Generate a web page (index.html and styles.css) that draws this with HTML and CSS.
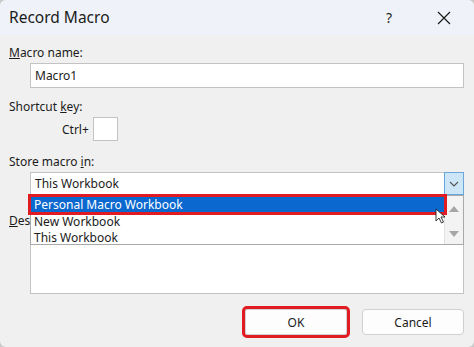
FILE: index.html
```html
<!DOCTYPE html>
<html lang="en">
<head>
    <meta charset="UTF-8">
    <title>Record Macro</title>
    <link rel="stylesheet" href="styles.css">
</head>
<body>
    <div class="dialog">
        <div class="titlebar">
            <span class="title">Record Macro</span>
            <span class="help">?</span>
            <svg class="close" width="14" height="14" viewBox="0 0 14 14">
                <path d="M1 1 L13 13 M13 1 L1 13" stroke="#1a1a1a" stroke-width="1.2" fill="none"/>
            </svg>
        </div>

        <div class="content">
            <div class="label label-first"><u>M</u>acro name:</div>
            <div class="field">Macro1</div>

            <div class="label label-short">Shortcut <u>k</u>ey:</div>
            <div class="shortcut-row">
                <span class="ctrl">Ctrl+</span>
                <span class="keybox"></span>
            </div>

            <div class="label label-store">Store macro <u>i</u>n:</div>
            <div class="combo">
                <span class="combo-text">This Workbook</span>
                <span class="combo-btn">
                    <svg width="10" height="6" viewBox="0 0 10 6">
                        <path d="M1 1 L5 5 L9 1" stroke="#555" stroke-width="1.1" fill="none"/>
                    </svg>
                </span>
            </div>

            <!-- the open list hides the rest of this label -->
            <div class="label label-desc"><u>D</u>escription:</div>
            <div class="desc-box"></div>

            <div class="buttons">
                <button class="btn btn-ok">OK</button>
                <button class="btn">Cancel</button>
            </div>
        </div>

        <div class="dropdown">
            <div class="options">
                <div class="option selected">Personal Macro Workbook</div>
                <div class="option">New Workbook</div>
                <div class="option">This Workbook</div>
            </div>
            <div class="scrollbar">
                <svg width="10" height="7" viewBox="0 0 10 7"><path d="M0 7 L5 1 L10 7 Z" fill="#a6a6a6"/></svg>
                <svg width="10" height="7" viewBox="0 0 10 7"><path d="M0 0 L5 6 L10 0 Z" fill="#a6a6a6"/></svg>
            </div>
        </div>
        <div class="highlight"></div>

        <svg class="cursor" width="12" height="16" viewBox="0 0 12 16">
            <path d="M1 1 L1 13 L4 10 L6.5 15 L8.5 14 L6 9 L10 9 Z" fill="#fff" stroke="#222" stroke-width="0.9" stroke-linejoin="round"/>
        </svg>
    </div>
</body>
</html>
```

FILE: styles.css
```css
body {
    margin: 0;
    width: 474px;
    height: 347px;
    overflow: hidden;
    background-color: #c9c9c9;
    font-family: 'Noto Sans', 'Open Sans', sans-serif;
    font-size: 12px;
    color: #1b1b1b;
}
.dialog {
    position: relative;
    width: 474px;
    height: 347px;
    background-color: #f0f0f0;
    border-radius: 6px;
    overflow: hidden;
}
.titlebar {
    height: 35px;
    display: flex;
    align-items: center;
    padding-left: 9px;
    background-color: #eff3f9;
}
.title {
    font-size: 15.5px;
    flex: 1;
    margin-top: -1px;
}
.help {
    font-size: 14px;
    margin-right: 45px;
}
.close {
    margin-right: 23px;
}
.content {
    padding: 0 10px 0 9px;
}
.label {
    height: 18px;
    line-height: 18px;
}
.label-first {
    margin-top: 9px;
}
.label-short {
    margin-top: 10px;
}
.label-store {
    margin-top: 12px;
}
.label-desc {
    width: 21px;
    overflow: hidden;
    white-space: nowrap;
    margin-top: 17px;
}
.field {
    margin: 1px 0 0 21px;
    height: 23px;
    line-height: 23px;
    padding-left: 4px;
    background-color: #fff;
    border: 1px solid #c3c3c3;
}
.shortcut-row {
    display: flex;
    align-items: center;
    margin: 1px 0 0 53px;
}
.ctrl {
    width: 31px;
}
.keybox {
    width: 23px;
    height: 22px;
    background-color: #fff;
    border: 1px solid #c3c3c3;
}
.combo {
    display: flex;
    margin: 1px 0 0 21px;
    height: 21px;
    background-color: #fff;
    border: 1px solid #c3c3c3;
}
.combo-text {
    flex: 1;
    line-height: 21px;
    padding-left: 4px;
}
.combo-btn {
    width: 18px;
    margin: -1px -1px -1px 0;
    display: flex;
    align-items: center;
    justify-content: center;
    background-color: #cde6f7;
    border: 1px solid #6aa6da;
}
.desc-box {
    margin: 1px 0 0 21px;
    height: 61px;
    background-color: #fff;
    border: 1px solid #c3c3c3;
}
.buttons {
    display: flex;
    justify-content: flex-end;
    gap: 15px;
    margin-top: 15px;
}
.btn {
    width: 102px;
    height: 26px;
    padding: 0;
    font-family: inherit;
    font-size: 12px;
    color: #1b1b1b;
    background-color: #fdfdfd;
    border: 1px solid #d0d0d0;
    border-radius: 4px;
}
.btn-ok {
    outline: 3px solid #e01b22;
    border-radius: 2px;
}
.dropdown {
    position: absolute;
    left: 30px;
    top: 195px;
    width: 432px;
    height: 48px;
    display: flex;
    background-color: #fff;
    border: 1px solid #a9a9a9;
}
.options {
    flex: 1;
    padding-top: 1px;
}
.option {
    height: 16.5px;
    line-height: 16.5px;
    padding-left: 3px;
}
.option.selected {
    background-color: #0a68cf;
    color: #fff;
}
.scrollbar {
    width: 18px;
    display: flex;
    flex-direction: column;
    align-items: center;
    justify-content: space-between;
    padding: 9px 0 6px;
    background-color: #f3f3f3;
    border-left: 1px solid #e3e3e3;
}
.highlight {
    position: absolute;
    left: 28px;
    top: 194px;
    width: 413px;
    height: 15px;
    border: 3px solid #e01b22;
}
.cursor {
    position: absolute;
    left: 435px;
    top: 208px;
}
```
